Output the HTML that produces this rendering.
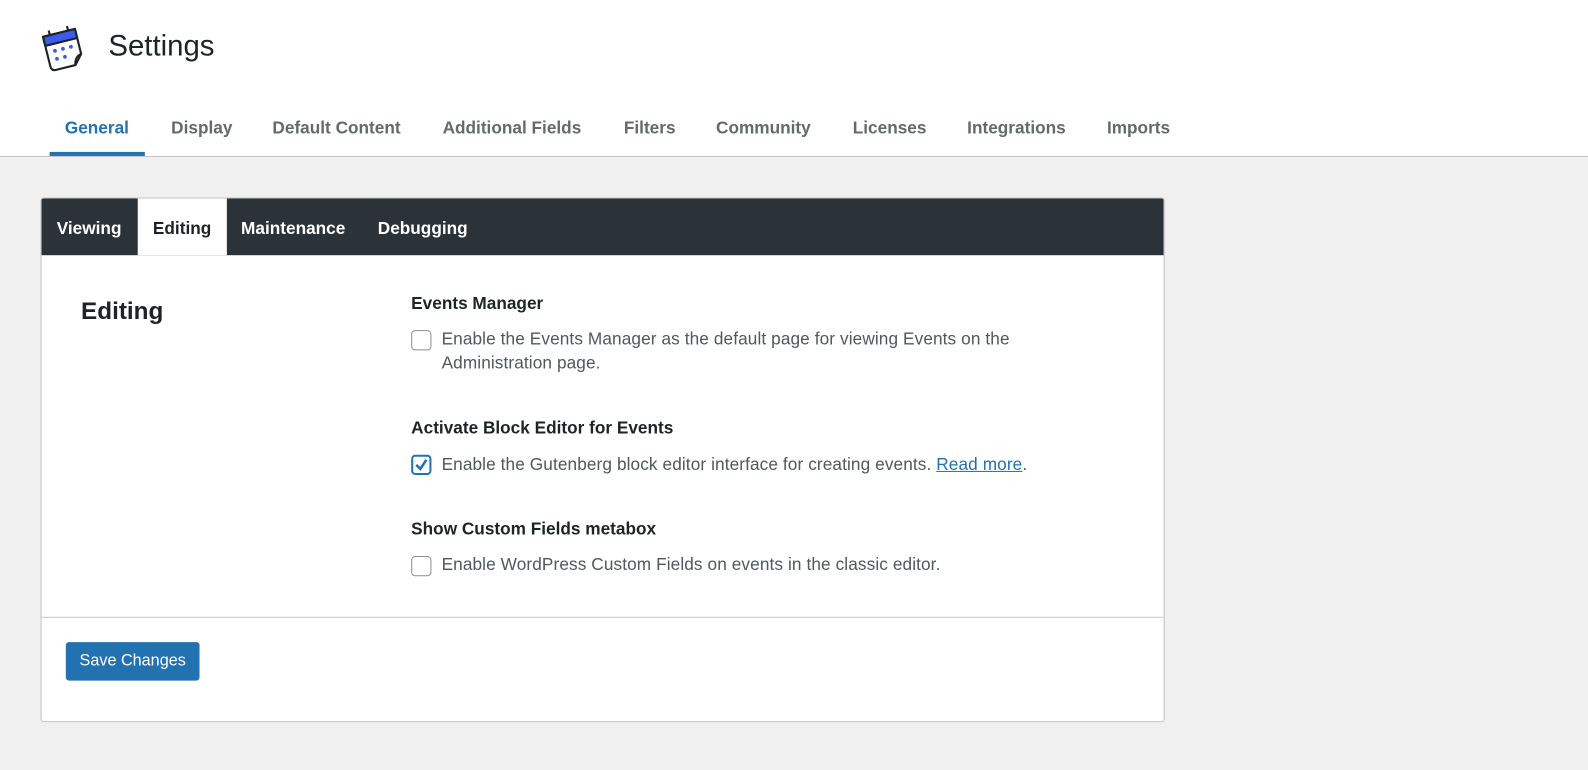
<!DOCTYPE html>
<html><head><style>
*{box-sizing:border-box;margin:0;padding:0}
body{width:1588px;height:770px;background:#f0f0f1;font-family:"Liberation Sans",sans-serif;color:#1d2327;position:relative;overflow:hidden}
.topbg{position:absolute;left:0;top:0;width:1588px;height:157px;background:#fff;border-bottom:1px solid #c3c4c7}
.wrap{position:absolute;left:0;top:0;width:1568px;height:760px;transform:scale(1.01276);transform-origin:0 0}
.title{position:absolute;left:107px;top:30px;font-size:29px;color:#1d2327}
.nav{position:absolute;top:117px;font-size:17px;font-weight:bold;color:#646970}
.navact{color:#2271b1}
.uline{position:absolute;left:49px;top:150px;width:94px;height:4px;background:#2271b1}
.box{position:absolute;left:40px;top:195px;width:1110px;height:518px;background:#fff;border:1px solid #c3c4c7;border-radius:3px;overflow:hidden}
.bar{position:absolute;left:0;top:0;width:100%;height:56px;background:#2c3338}
.st{position:absolute;top:20px;font-size:17px;font-weight:bold;color:#fff}
.stact{position:absolute;left:95px;top:0;width:88px;height:56px;background:#fff}
.h{position:absolute;font-size:17px;font-weight:bold;color:#1d2327}
.t{position:absolute;font-size:17px;letter-spacing:0.1px;color:#50575e;line-height:24px}
.cb{position:absolute;width:20px;height:20px;border:1px solid #8c8f94;border-radius:4px;background:#fff}
.sep{position:absolute;left:0;top:413px;width:100%;height:1px;background:#c3c4c7}
.btn{position:absolute;left:24px;top:438px;width:132px;height:38px;background:#2271b1;border-radius:3px;color:#fff;font-size:16px;text-align:center;line-height:38px}
</style></head><body>
<div class="topbg"></div>
<div class="wrap">
<svg style="position:absolute;left:36px;top:20px" width="58" height="58" viewBox="0 0 50 50">
<g transform="rotate(-14 24 26)">
<path d="M9 10 H37 V32 L30 40 H13 Q9 40 9 36 Z" fill="#fff" stroke="#1d2327" stroke-width="1.8" stroke-linejoin="round"/>
<path d="M9 10 H37 V18 H9 Z" fill="#3b5be8" stroke="#1d2327" stroke-width="1.8" stroke-linejoin="round"/>
<path d="M15 6 V11 M31 6 V11" stroke="#1d2327" stroke-width="1.8"/>
<path d="M30 40 Q31 33 37 32" fill="none" stroke="#1d2327" stroke-width="1.8"/>
<circle cx="16" cy="24" r="1.6" fill="#3b5be8"/><circle cx="23" cy="24" r="1.6" fill="#3b5be8"/><circle cx="30" cy="24" r="1.6" fill="#3b5be8"/>
<circle cx="16" cy="31" r="1.6" fill="#3b5be8"/><circle cx="23" cy="31" r="1.6" fill="#3b5be8"/>
</g>
</svg>
<div class="title">Settings</div>
<div class="nav navact" style="left:64px">General</div>
<div class="nav" style="left:169px">Display</div>
<div class="nav" style="left:269px">Default Content</div>
<div class="nav" style="left:437px">Additional Fields</div>
<div class="nav" style="left:616px">Filters</div>
<div class="nav" style="left:707px">Community</div>
<div class="nav" style="left:842px">Licenses</div>
<div class="nav" style="left:955px">Integrations</div>
<div class="nav" style="left:1093px">Imports</div>
<div class="uline"></div>
<div class="box">
<div class="bar"></div>
<div class="stact"></div>
<div class="st" style="left:15px">Viewing</div>
<div class="st" style="left:110px;color:#1d2327">Editing</div>
<div class="st" style="left:197px">Maintenance</div>
<div class="st" style="left:332px">Debugging</div>
<div class="h" style="left:39px;top:98px;font-size:24px">Editing</div>
<div class="h" style="left:365px;top:94px">Events Manager</div>
<div class="cb" style="left:365px;top:130px"></div>
<div class="t" style="left:395px;top:127px;width:620px">Enable the Events Manager as the default page for viewing Events on the Administration page.</div>
<div class="h" style="left:365px;top:217px">Activate Block Editor for Events</div>
<div class="cb" style="left:365px;top:253px;border:2px solid #2271b1"><svg width="16" height="16" viewBox="0 0 16 16" style="position:absolute;left:0;top:0"><path d="M3 8 L7 12 L13 3" fill="none" stroke="#2271b1" stroke-width="2.5"/></svg></div>
<div class="t" style="left:395px;top:251px">Enable the Gutenberg block editor interface for creating events. <span style="color:#2271b1;text-decoration:underline">Read more</span>.</div>
<div class="h" style="left:365px;top:317px">Show Custom Fields metabox</div>
<div class="cb" style="left:365px;top:353px"></div>
<div class="t" style="left:395px;top:350px">Enable WordPress Custom Fields on events in the classic editor.</div>
<div class="sep"></div>
<div class="btn">Save Changes</div>
</div>
</div>
</body></html>
